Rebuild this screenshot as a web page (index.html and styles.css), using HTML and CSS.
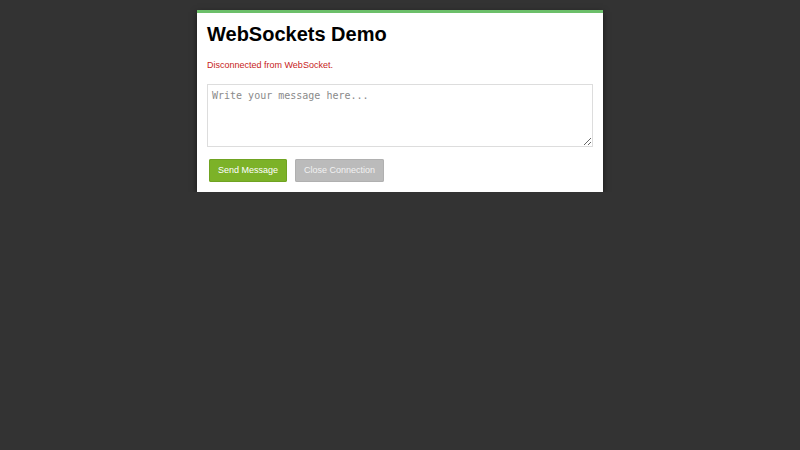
FILE: index.html
```html
<!DOCTYPE html>
<html lang="en">

<head>
    <meta charset="UTF-8">
    <meta name="viewport" content="width=device-width, initial-scale=1.0">
    <title>WebSockets Demo</title>
    <link rel="stylesheet" href="styles.css">
</head>

<body>
    <div class="page">
        <h1>WebSockets Demo</h1>

        <div class="status closed" id="status">Disconnected from WebSocket.</div>

        <form class="message-form" id="message-form">
            <textarea id="message" placeholder="Write your message here..." required></textarea>
            <div class="actions">
                <button type="submit" class="send">Send Message</button>
                <button type="button" class="close" id="close">Close Connection</button>
            </div>
        </form>
    </div>
</body>

</html>
```

FILE: styles.css
```css
html {
    box-sizing: border-box;
}

*,
*:before,
*:after {
    box-sizing: inherit;
}

body {
    margin: 0;
    padding: 10px 0 0;
    background-color: #333;
    font-family: "Liberation Sans", Arial, sans-serif;
    font-size: 9px;
    color: #000;
}

.page {
    width: 406px;
    margin: 0 auto;
    padding: 10px;
    background-color: #fff;
    border-top: 3px solid #6cbf6a;
    box-shadow: 0 2px 6px rgba(0, 0, 0, 0.5);
}

h1 {
    margin: 0 0 14px;
    font-size: 20px;
    line-height: 23px;
    font-weight: bold;
}

.status {
    margin: 0 0 13px;
    line-height: 11px;
}

.status.closed {
    color: #c71c22;
}

.status.open {
    color: #5a9d2a;
}

textarea {
    display: block;
    width: 100%;
    height: 63px;
    margin: 0 0 12px;
    padding: 5px 4px;
    font-family: "DejaVu Sans Mono", monospace;
    font-size: 10px;
    border: 1px solid #ddd;
    border-radius: 0;
}

textarea::placeholder {
    color: #8a8a8a;
}

.actions {
    display: flex;
    gap: 8px;
    padding-left: 2px;
}

button {
    padding: 6px 9px;
    font-family: inherit;
    font-size: 9px;
    line-height: 11px;
    color: #fff;
    border: 0;
    border-radius: 2px;
    cursor: pointer;
}

button.send {
    background-color: #7cb228;
    box-shadow: inset 0 0 0 1px #70a322;
}

button.close {
    background-color: #bbb;
    color: #f2f2f2;
    box-shadow: inset 0 0 0 1px #b0b0b0;
}
```
